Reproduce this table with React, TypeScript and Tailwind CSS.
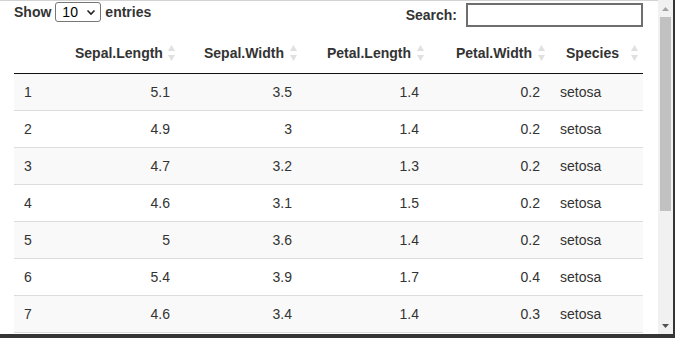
const rows: [number, string, string, string, string, string][] = [
  [1, "5.1", "3.5", "1.4", "0.2", "setosa"],
  [2, "4.9", "3", "1.4", "0.2", "setosa"],
  [3, "4.7", "3.2", "1.3", "0.2", "setosa"],
  [4, "4.6", "3.1", "1.5", "0.2", "setosa"],
  [5, "5", "3.6", "1.4", "0.2", "setosa"],
  [6, "5.4", "3.9", "1.7", "0.4", "setosa"],
  [7, "4.6", "3.4", "1.4", "0.3", "setosa"],
];

function SortIcon() {
  return (
    <svg
      width="9"
      height="19"
      viewBox="0 0 9 19"
      className="absolute right-[4px] top-1/2 -translate-y-1/2"
    >
      <path d="M4.5 1.5 L8 7.5 L1 7.5 Z" fill="#e0e0e0" />
      <path d="M4.5 17.5 L8 11.5 L1 11.5 Z" fill="#e0e0e0" />
    </svg>
  );
}

function Th({ label, align }: { label: string; align: "right" | "center" }) {
  return (
    <th
      className={`relative pt-[10px] pb-[10px] pl-[10px] pr-[18px] leading-[20px] font-bold border-b border-[#111] ${
        align === "right" ? "text-right" : "text-center"
      }`}
    >
      {label}
      <SortIcon />
    </th>
  );
}

export default function App() {
  return (
    <div
      className="w-[675px] h-[338px] flex flex-col bg-white text-[14px] text-[#333]"
      style={{ fontFamily: '"Liberation Sans", Arial, sans-serif' }}
    >
      <div className="flex h-[334px]">
        <div className="w-[658px] h-full overflow-hidden border-t border-[#d3d3d3]">
          <div className="flex justify-between h-[32px] pl-[14px] pr-[15px]">
            <div className="flex items-center h-[20px] mt-[1px] font-bold">
              <span>Show</span>
              <div className="ml-[4px] mr-[4px] flex items-center justify-between w-[46px] h-[20px] border border-[#767676] rounded-[3px] pl-[6px] pr-[4px] font-normal text-black">
                <span>10</span>
                <svg width="10" height="10" viewBox="0 0 10 10">
                  <path d="M1.5 3.5 L5 7 L8.5 3.5" fill="none" stroke="#222" strokeWidth="1.6" />
                </svg>
              </div>
              <span>entries</span>
            </div>
            <div className="flex items-center h-[24px] mt-[2px] font-bold">
              <span>Search:</span>
              <div className="ml-[9px] w-[177px] h-[24px] border-2 border-[#6e6e6e] bg-white" />
            </div>
          </div>
          <table className="ml-[14px] w-[629px] table-fixed border-collapse">
            <colgroup>
              <col className="w-[51px]" />
              <col className="w-[115px]" />
              <col className="w-[122px]" />
              <col className="w-[127px]" />
              <col className="w-[121px]" />
              <col className="w-[93px]" />
            </colgroup>
            <thead>
              <tr>
                <th className="border-b border-[#111] py-[10px] leading-[20px]"></th>
                <Th label="Sepal.Length" align="right" />
                <Th label="Sepal.Width" align="right" />
                <Th label="Petal.Length" align="right" />
                <Th label="Petal.Width" align="right" />
                <Th label="Species" align="center" />
              </tr>
            </thead>
            <tbody>
              {rows.map((r, i) => (
                <tr
                  key={r[0]}
                  className={`border-b border-[#ddd] ${i % 2 === 0 ? "bg-[#f9f9f9]" : "bg-white"}`}
                >
                  <td className="px-[10px] py-[8px] leading-[20px]">{r[0]}</td>
                  <td className="px-[10px] py-[8px] leading-[20px] text-right">{r[1]}</td>
                  <td className="px-[10px] py-[8px] leading-[20px] text-right">{r[2]}</td>
                  <td className="px-[10px] py-[8px] leading-[20px] text-right">{r[3]}</td>
                  <td className="px-[10px] py-[8px] leading-[20px] text-right">{r[4]}</td>
                  <td className="px-[10px] py-[8px] leading-[20px]">{r[5]}</td>
                </tr>
              ))}
            </tbody>
          </table>
        </div>
        <div className="w-[15px] h-full bg-[#f1f1f1] flex flex-col items-center">
          <div className="h-[17px] flex items-center justify-center">
            <svg width="7" height="4" viewBox="0 0 7 4">
              <path d="M3.5 0 L7 4 L0 4 Z" fill="#a3a3a3" />
            </svg>
          </div>
          <div className="w-[11px] h-[194px] bg-[#c1c1c1]" />
          <div className="flex-1" />
          <div className="h-[17px] flex items-center justify-center">
            <svg width="7" height="4" viewBox="0 0 7 4">
              <path d="M0 0 L7 0 L3.5 4 Z" fill="#505050" />
            </svg>
          </div>
        </div>
        <div className="w-[2px] h-full bg-[#353535]" />
      </div>
      <div className="h-[4px] bg-[#353535]" />
    </div>
  );
}
